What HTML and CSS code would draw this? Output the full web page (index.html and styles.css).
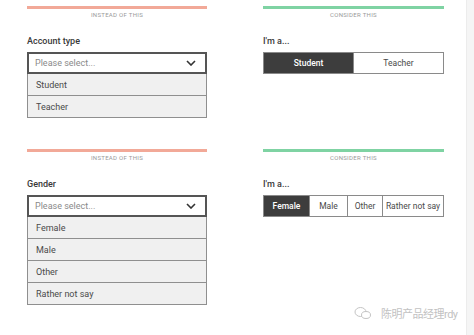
FILE: index.html
```html
<!DOCTYPE html>
<html lang="en">
<head>
  <meta charset="UTF-8" />
  <meta name="viewport" content="width=device-width, initial-scale=1.0"/>
  <title>Select vs segmented</title>
  <link rel="stylesheet" href="styles.css">
</head>
<body>
  <div class="page">
    <section class="pair">
      <div class="col">
        <div class="verdict bad">
          <div class="bar"></div>
          <div class="tag">INSTEAD OF THIS</div>
        </div>
        <div class="field-label">Account type</div>
        <div class="select">
          <div class="select-box">
            <span>Please select...</span>
            <svg class="chevron" width="10" height="6" viewBox="0 0 10 6"><path d="M1 1l4 4 4-4" fill="none" stroke="#333" stroke-width="1.6"/></svg>
          </div>
          <div class="option">Student</div>
          <div class="option">Teacher</div>
        </div>
      </div>
      <div class="col">
        <div class="verdict good">
          <div class="bar"></div>
          <div class="tag">CONSIDER THIS</div>
        </div>
        <div class="field-label">I'm a...</div>
        <div class="segmented">
          <div class="seg active wide">Student</div>
          <div class="seg wide">Teacher</div>
        </div>
      </div>
    </section>

    <section class="pair">
      <div class="col">
        <div class="verdict bad">
          <div class="bar"></div>
          <div class="tag">INSTEAD OF THIS</div>
        </div>
        <div class="field-label">Gender</div>
        <div class="select">
          <div class="select-box">
            <span>Please select...</span>
            <svg class="chevron" width="10" height="6" viewBox="0 0 10 6"><path d="M1 1l4 4 4-4" fill="none" stroke="#333" stroke-width="1.6"/></svg>
          </div>
          <div class="option">Female</div>
          <div class="option">Male</div>
          <div class="option">Other</div>
          <div class="option">Rather not say</div>
        </div>
      </div>
      <div class="col">
        <div class="verdict good">
          <div class="bar"></div>
          <div class="tag">CONSIDER THIS</div>
        </div>
        <div class="field-label">I'm a...</div>
        <div class="segmented">
          <div class="seg active g1">Female</div>
          <div class="seg g2">Male</div>
          <div class="seg g3">Other</div>
          <div class="seg g4">Rather not say</div>
        </div>
      </div>
    </section>
  </div>

  <div class="edge"></div>

  <div class="watermark">
    <svg width="18" height="14" viewBox="0 0 18 14"><ellipse cx="6.5" cy="6" rx="5.5" ry="4.5" fill="none" stroke="#c4c4c4" stroke-width="1"/><ellipse cx="12" cy="9" rx="4.5" ry="3.5" fill="#fff" stroke="#c4c4c4" stroke-width="1"/></svg>
    <span>陈明产品经理rdy</span>
  </div>
</body>
</html>
```

FILE: styles.css
```css
html, body {
  margin: 0;
  height: 100%;
  background-color: #fff;
  font-family: Roboto, "Noto Sans CJK SC", sans-serif;
  color: #333;
}
body {
  position: relative;
  overflow: hidden;
}
.page {
  padding: 6px 0 0 27px;
}
.pair {
  display: grid;
  grid-template-columns: 180px 181px;
  column-gap: 56px;
  margin-bottom: 31px;
}
.verdict .bar {
  height: 3px;
}
.verdict.bad .bar {
  background-color: #f2a998;
}
.verdict.good .bar {
  background-color: #7fd3a3;
}
.tag {
  text-align: center;
  font-size: 6px;
  line-height: 9px;
  letter-spacing: 0.3px;
  color: #9a9a9a;
  margin-top: 1px;
}
.field-label {
  font-size: 9px;
  font-weight: 500;
  line-height: 12px;
  color: #3a3a3a;
  margin: 16px 0 5px 0;
}
.select {
  display: flex;
  flex-direction: column;
}
.select-box {
  height: 22px;
  box-sizing: border-box;
  border: 2px solid #555;
  display: flex;
  align-items: center;
  justify-content: space-between;
  padding: 0 9px 0 6px;
  font-size: 9px;
  color: #8a8a8a;
}
.option {
  height: 22px;
  box-sizing: border-box;
  border: 1px solid #8f8f8f;
  border-top: none;
  background-color: #f0f0f0;
  display: flex;
  align-items: center;
  padding-left: 8px;
  font-size: 9px;
  color: #4a4a4a;
}
.segmented {
  display: flex;
  height: 22px;
  box-sizing: border-box;
  border: 1px solid #8a8a8a;
}
.seg {
  display: flex;
  align-items: center;
  justify-content: center;
  font-size: 8.5px;
  color: #4a4a4a;
  background-color: #fff;
  border-left: 1px solid #8a8a8a;
  white-space: nowrap;
}
.seg:first-child {
  border-left: none;
}
.seg.active {
  background-color: #3d3d3d;
  color: #fff;
  font-weight: 500;
}
.seg.wide {
  flex: 1;
}
.seg.g1 { width: 45px; }
.seg.g2 { width: 37px; }
.seg.g3 { width: 34px; }
.seg.g4 { flex: 1; }

.edge {
  position: absolute;
  top: 0;
  right: 0;
  width: 7px;
  height: 100%;
  background-color: #f5f5f5;
  border-left: 1px solid #ececec;
}
.watermark {
  position: absolute;
  left: 354px;
  top: 305px;
  display: flex;
  align-items: center;
  gap: 9px;
  font-size: 11px;
  letter-spacing: -0.5px;
  color: #c2c2c2;
}
```
